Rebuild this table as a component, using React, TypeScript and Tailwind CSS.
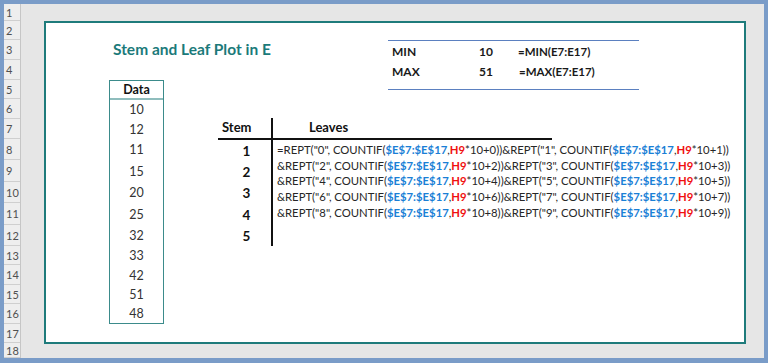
import React from "react";

const rowNums = Array.from({ length: 18 }, (_, i) => i + 1);

const B = ({ children }: { children: React.ReactNode }) => (
  <span className="font-bold text-[#1a7fd6]">{children}</span>
);
const R = ({ children }: { children: React.ReactNode }) => (
  <span className="font-bold text-[#f01010]">{children}</span>
);

const Part = ({ lead, a, b }: { lead: string; a: string; b: string }) => (
  <>
    {lead}REPT("{a}", COUNTIF(<B>$E$7:$E$17</B>,<R>H9</R>*10+{a}))&amp;REPT("{b}", COUNTIF(
    <B>$E$7:$E$17</B>,<R>H9</R>*10+{b}))
  </>
);

const data = ["10", "12", "11", "15", "20", "25", "32", "33", "42", "51", "48"];
const dataRowH = ["h-[19px]", "h-[20px]", "h-[21px]", "h-[22px]", "h-[21px]", "h-[22px]", "h-[21px]", "h-[19px]", "h-[20px]", "h-[19px]", "h-[19px]"];

export default function App() {
  return (
    <div
      className="w-[768px] h-[363px] overflow-hidden bg-[#7a9cc8] pt-[4px] px-[4px] pb-[5px]"
      style={{ fontFamily: "Lato, 'Noto Sans', sans-serif" }}
    >
      <div className="flex h-full bg-[#e6e6e6]">
        {/* row headers */}
        <div className="w-[17px] shrink-0 grid grid-rows-[17px_19px_20px_20px_19px_20px_20px_21px_22px_21px_22px_21px_19px_20px_19px_20px_19px_15px] bg-[#eeeeee] border-r border-[#c6c6c6]">
          {rowNums.map((n) => (
            <div
              key={n}
              className="border-b border-[#cfcfcf] pl-[2px] text-[11px] leading-none text-[#505050] flex items-center overflow-hidden"
            >
              {n}
            </div>
          ))}
        </div>

        {/* sheet area */}
        <div className="flex-1 grid grid-rows-[17px_19px_20px_20px_19px_20px_20px_21px_22px_21px_22px_21px_19px_20px_19px_20px_19px_15px]">
          <div className="row-start-2 row-end-18 ml-[23px] mr-[18px] mb-[-1px] border-2 border-[#1e7b7b] bg-white">
            <div className="grid h-full grid-rows-[17px_20px_20px_19px_20px_20px_21px_22px_21px_22px_21px_19px_20px_19px_20px_18px]">
              {/* title */}
              <div className="row-start-2 col-start-1 ml-[67px] flex items-center text-[15.5px] font-bold text-[#1b7a7a] whitespace-nowrap">
                Stem and Leaf Plot in E
              </div>

              {/* min max */}
              <div className="row-start-2 row-end-5 col-start-1 self-start ml-[342px] w-[251px] border-y border-[#5b80c0] pt-[1px] pb-[7px] text-[12px] font-bold text-[#1a1a1a]">
                <div className="grid grid-cols-[80px_21px_auto] pl-[4px] h-[20px] items-center">
                  <span>MIN</span>
                  <span className="text-right">10</span>
                  <span className="pl-[25px] text-[11.5px]">=MIN(E7:E17)</span>
                </div>
                <div className="grid grid-cols-[80px_21px_auto] pl-[4px] h-[20px] items-center">
                  <span>MAX</span>
                  <span className="text-right">51</span>
                  <span className="pl-[26px] text-[11.5px]">=MAX(E7:E17)</span>
                </div>
              </div>

              {/* data table */}
              <div className="row-start-4 row-end-16 col-start-1 ml-[63px] w-[55px] border border-[#3b8b8b] flex flex-col">
                <div className="h-[17px] flex items-center justify-center pt-[1px] text-[12.5px] font-bold text-[#111]">
                  Data
                </div>
                <div className="h-[2px] bg-[#8fbdbd]" />
                {data.map((d, i) => (
                  <div
                    key={i}
                    className={`${dataRowH[i]} flex items-center justify-center pt-[2px] text-[12.5px] text-[#333]`}
                  >
                    {d}
                  </div>
                ))}
              </div>

              {/* stem and leaves */}
              <div className="row-start-6 row-end-12 col-start-1 ml-[172px] mt-[-1px] grid grid-cols-[53px_2px_279px] grid-rows-[20px_2px_106px] self-start">
                <div className="col-start-1 row-start-1 flex items-center pl-[4px] text-[13px] font-bold text-[#111]">
                  Stem
                </div>
                <div className="col-start-2 row-start-1 row-end-4 bg-[#111]" />
                <div className="col-start-3 row-start-1 flex items-center pl-[36px] text-[13px] font-bold text-[#111]">
                  Leaves
                </div>
                <div className="col-start-1 col-end-4 row-start-2 bg-[#111]" />
                <div className="col-start-1 row-start-3 grid grid-rows-[20px_22px_21px_22px_21px] text-[13.5px] font-bold text-[#111]">
                  {["1", "2", "3", "4", "5"].map((s) => (
                    <div key={s} className="flex items-center justify-center pl-[4px] pt-[2px]">
                      {s}
                    </div>
                  ))}
                </div>
                <div className="col-start-3 row-start-3 pl-[4px] pt-[2px] text-[11.3px] leading-[15.7px] text-[#262626] whitespace-nowrap">
                  <div>
                    <Part lead="=" a="0" b="1" />
                  </div>
                  <div>
                    <Part lead="&" a="2" b="3" />
                  </div>
                  <div>
                    <Part lead="&" a="4" b="5" />
                  </div>
                  <div>
                    <Part lead="&" a="6" b="7" />
                  </div>
                  <div>
                    <Part lead="&" a="8" b="9" />
                  </div>
                </div>
              </div>
            </div>
          </div>
        </div>
      </div>
    </div>
  );
}
